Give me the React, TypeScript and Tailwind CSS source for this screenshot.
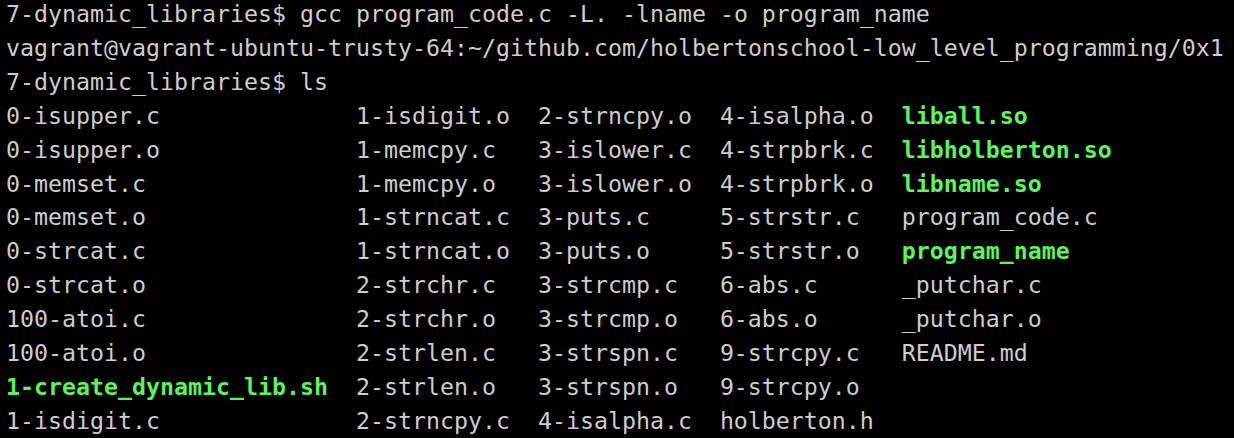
const prompt = [
    "7-dynamic_libraries$ gcc program_code.c -L. -lname -o program_name",
    "vagrant@vagrant-ubuntu-trusty-64:~/github.com/holbertonschool-low_level_programming/0x1",
    "7-dynamic_libraries$ ls",
];

// [name, isExecutable]
const listing: [string, boolean][][] = [
    [["0-isupper.c", false], ["1-isdigit.o", false], ["2-strncpy.o", false], ["4-isalpha.o", false], ["liball.so", true]],
    [["0-isupper.o", false], ["1-memcpy.c", false], ["3-islower.c", false], ["4-strpbrk.c", false], ["libholberton.so", true]],
    [["0-memset.c", false], ["1-memcpy.o", false], ["3-islower.o", false], ["4-strpbrk.o", false], ["libname.so", true]],
    [["0-memset.o", false], ["1-strncat.c", false], ["3-puts.c", false], ["5-strstr.c", false], ["program_code.c", false]],
    [["0-strcat.c", false], ["1-strncat.o", false], ["3-puts.o", false], ["5-strstr.o", false], ["program_name", true]],
    [["0-strcat.o", false], ["2-strchr.c", false], ["3-strcmp.c", false], ["6-abs.c", false], ["_putchar.c", false]],
    [["100-atoi.c", false], ["2-strchr.o", false], ["3-strcmp.o", false], ["6-abs.o", false], ["_putchar.o", false]],
    [["100-atoi.o", false], ["2-strlen.c", false], ["3-strspn.c", false], ["9-strcpy.c", false], ["README.md", false]],
    [["1-create_dynamic_lib.sh", true], ["2-strlen.o", false], ["3-strspn.o", false], ["9-strcpy.o", false], ["", false]],
    [["1-isdigit.c", false], ["2-strncpy.c", false], ["4-isalpha.c", false], ["holberton.h", false], ["", false]],
];

export default function App() {
    return (
        <div className="w-[1234px] h-[438px] overflow-hidden bg-black">
            <div className="-mt-[3px] pl-[6px] font-['DejaVu_Sans_Mono',Menlo,monospace] text-[23.25px] leading-[33.9px] text-[#cdcdcd] whitespace-pre">
                {prompt.map((line) => (
                    <div key={line}>{line}</div>
                ))}
                <div className="grid grid-cols-[25ch_13ch_13ch_13ch_1fr]">
                    {listing.flat().map(([name, exec], i) => (
                        <div
                            key={i}
                            className={exec ? "font-bold text-[#5ff25f]" : ""}
                        >
                            {name}
                        </div>
                    ))}
                </div>
            </div>
        </div>
    );
}
